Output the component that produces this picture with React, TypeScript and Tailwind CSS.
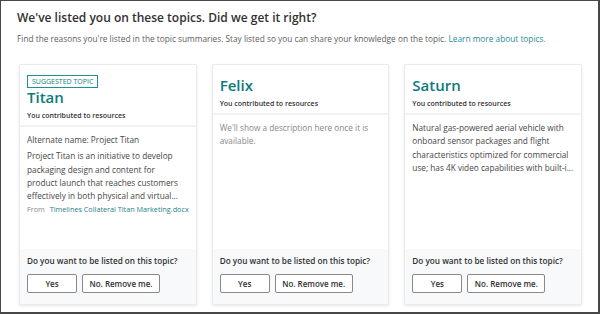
import React from "react";

const font = { fontFamily: '"Open Sans", "Noto Sans", sans-serif' };

type Topic = {
  name: string;
  suggested?: boolean;
  alt?: string;
  lines?: string[];
  placeholder?: string[];
  from?: string;
};

const topics: Topic[] = [
  {
    name: "Titan",
    suggested: true,
    alt: "Alternate name: Project Titan",
    lines: [
      "Project Titan is an initiative to develop",
      "packaging design and content for",
      "product launch that reaches customers",
      "effectively in both physical and virtual...",
    ],
    from: "Timelines Collateral Titan Marketing.docx",
  },
  {
    name: "Felix",
    placeholder: ["We'll show a description here once it is", "available."],
  },
  {
    name: "Saturn",
    lines: [
      "Natural gas-powered aerial vehicle with",
      "onboard sensor packages and flight",
      "characteristics optimized for commercial",
      "use; has 4K video capabilities with built-i...",
    ],
  },
];

function Card({ t }: { t: Topic }) {
  return (
    <div className="flex flex-col bg-white border border-[#eceaea] rounded-[2px] shadow-[0_1px_3px_rgba(0,0,0,0.10)] overflow-hidden">
      <div className="px-[7px] pt-[10px] pb-[4px] border-b-2 border-[#f2f2f2]">
        {t.suggested && (
          <div className="mb-[-1px] flex w-fit items-center h-[13px] px-[4px] border border-[#1f9194] text-[#0a8083] text-[7px] leading-none">
            SUGGESTED TOPIC
          </div>
        )}
        <div className="text-[15px] leading-[20px] font-semibold text-[#0b7b7d]">{t.name}</div>
        <div className="mt-[4px] text-[7px] leading-[10px] font-semibold text-[#323130] whitespace-nowrap">
          You contributed to resources
        </div>
      </div>
      <div className="flex-1 px-[7px] pt-[6px] text-[8.25px] leading-[13.3px] whitespace-nowrap">
        {t.alt && <div className="text-[#484644]">{t.alt}</div>}
        {t.lines && (
          <div className={`text-[#484644] ${t.alt ? "mt-[3px]" : ""}`}>
            {t.lines.map((l) => (
              <div key={l}>{l}</div>
            ))}
          </div>
        )}
        {t.placeholder && (
          <div className="text-[#8a8886]">
            {t.placeholder.map((l) => (
              <div key={l}>{l}</div>
            ))}
          </div>
        )}
        {t.from && (
          <div className="mt-[2px] text-[7.25px] leading-[10px] text-[#8a8886]">
            From <span className="ml-[3px] text-[#1d7f85]">{t.from}</span>
          </div>
        )}
      </div>
      <div className="bg-[#f7f9fb] px-[7px] pt-[6px] pb-[11px]">
        <div className="text-[8.2px] leading-[12px] font-semibold text-[#323130] whitespace-nowrap">
          Do you want to be listed on this topic?
        </div>
        <div className="mt-[7px] flex gap-[5px]">
          <button className="h-[19px] w-[50px] bg-white border border-[#8a8886] rounded-[2px] text-[8px] font-semibold text-[#323130]">
            Yes
          </button>
          <button className="h-[19px] w-[78px] bg-white border border-[#8a8886] rounded-[2px] text-[8px] font-semibold text-[#323130] whitespace-nowrap">
            No. Remove me.
          </button>
        </div>
      </div>
    </div>
  );
}

export default function App() {
  return (
    <div
      style={font}
      className="w-[600px] h-[314px] bg-white border-t border-l border-r-2 border-b-2 border-[#474747] flex flex-col"
    >
      <div className="pl-4 pt-[9px]">
        <div className="text-[12px] leading-[16px] font-semibold text-[#323130] whitespace-nowrap">
          We've listed you on these topics. Did we get it right?
        </div>
        <div className="mt-[7px] text-[8.3px] leading-[11px] text-[#605e5c] whitespace-nowrap">
          Find the reasons you're listed in the topic summaries. Stay listed so you can share your knowledge on the
          topic. <span className="text-[#2a8a98]">Learn more about topics.</span>
        </div>
      </div>
      <div className="flex-1 grid grid-cols-3 gap-[15px] pl-[18px] pr-[16px] pt-[20px] pb-[7px]">
        {topics.map((t) => (
          <Card key={t.name} t={t} />
        ))}
      </div>
    </div>
  );
}
